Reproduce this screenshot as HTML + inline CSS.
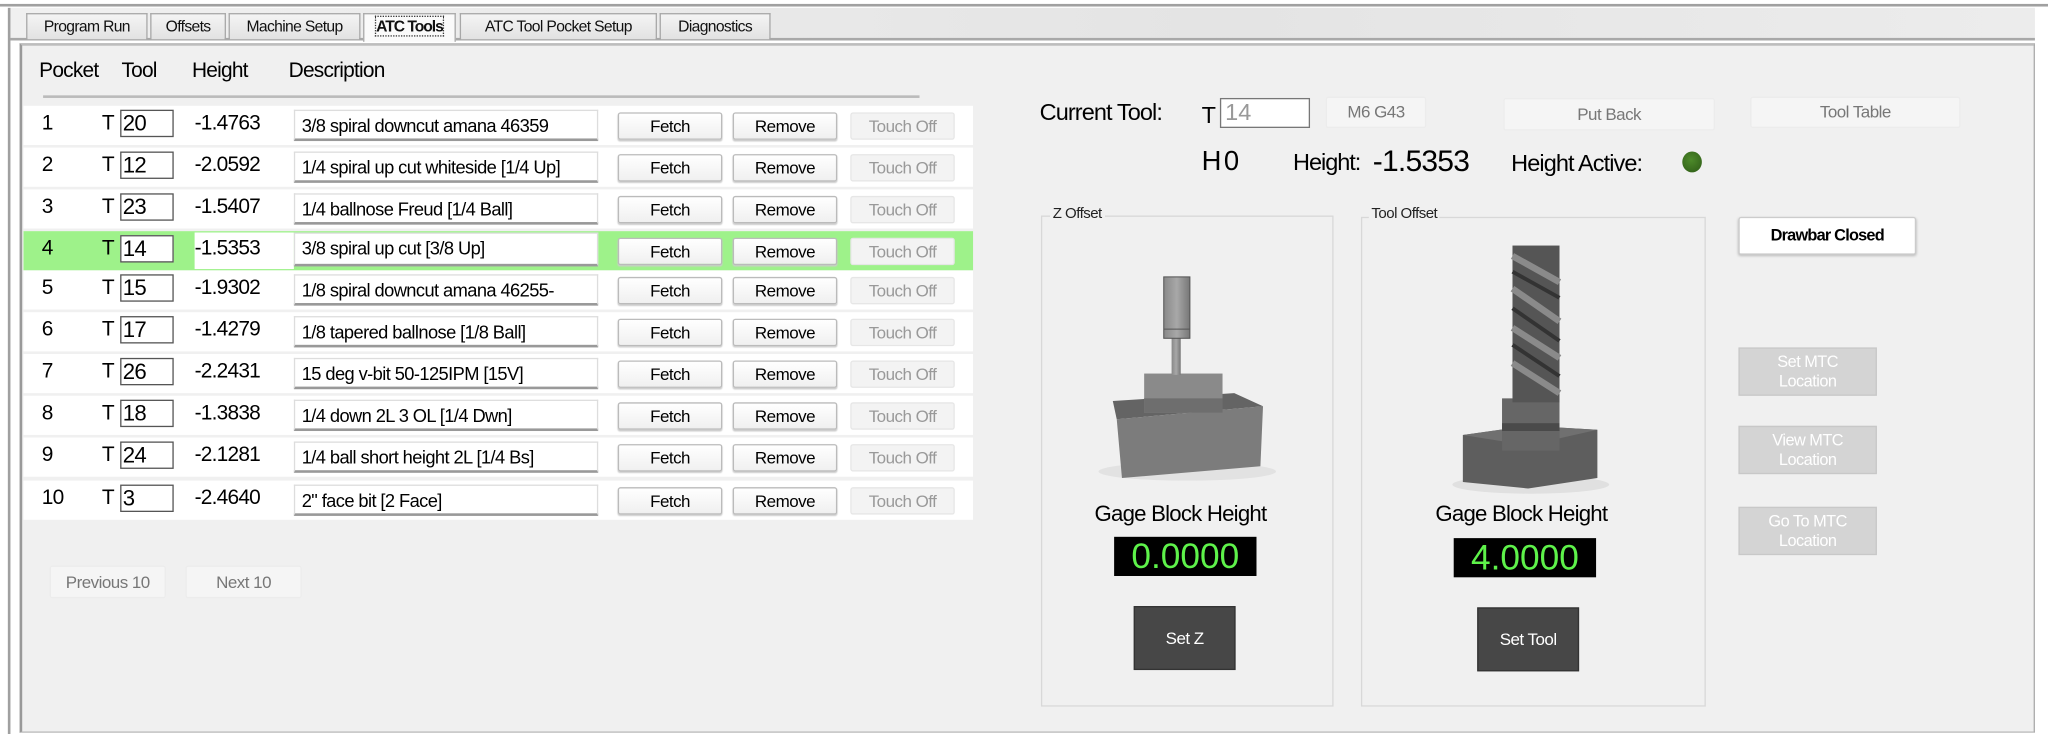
<!DOCTYPE html>
<html><head><meta charset="utf-8"><style>
*{box-sizing:border-box;margin:0;padding:0}
html,body{width:2048px;height:734px;overflow:hidden;background:#fff}
#s{position:absolute;left:0;top:0;width:1568px;height:562px;transform:scale(1.30612);transform-origin:0 0;font-family:"Liberation Sans",sans-serif;background:#fff}
.a{position:absolute}
.tab{position:absolute;top:10px;height:20px;border:1px solid #a8a8a8;border-bottom:none;background:linear-gradient(#f4f4f4,#e2e2e2);font-size:12px;line-height:18px;text-align:center;color:#111;letter-spacing:-.5px}
.row{position:absolute;left:18px;width:727px;height:30px;background:#fff}
.row span{position:absolute;font-size:16px;top:5px;letter-spacing:-.6px}
.tb{position:absolute;left:74px;top:3px;width:41px;height:21px;border:1px solid #555;font-size:17px;line-height:20px;padding-left:1px;background:#fff;letter-spacing:-.6px}
.desc{position:absolute;left:207px;top:3px;width:233px;height:24px;border:1px solid #ddd;border-bottom:2px solid #999;background:#fff;font-size:14px;line-height:22px;padding-left:5px;white-space:nowrap;overflow:hidden;letter-spacing:-.45px}
.btn{position:absolute;top:5px;height:21px;width:80px;border:1px solid #bbb;border-radius:2px;background:linear-gradient(#fff,#f0f0f0);font-size:13px;text-align:center;line-height:19px;box-shadow:0 1px 1px #ccc;letter-spacing:-.4px}
.dis{color:#999;border-color:#e6e6e6;background:#f3f3f3;box-shadow:none}
.fb{position:absolute;background:#f5f5f5;border:1px solid #ececec;border-radius:2px;color:#777;font-size:13px;text-align:center;letter-spacing:-.4px}
.mtc{position:absolute;left:1331px;width:106px;height:37px;background:#d4d4d4;border:1px solid #c8c8c8;color:#fff;font-size:12.5px;text-align:center;line-height:15px;padding-top:3px;letter-spacing:-.4px}
.grp{position:absolute;border:1px solid #d8d8d8}
.lbl{position:absolute;font-size:11.5px;background:#f0f0f0;padding:0 2px;color:#222;letter-spacing:-.4px}
.dro{position:absolute;background:#000;color:#5ef24a;font-size:27px;text-align:center;line-height:30px}
.dk{position:absolute;background:#474747;color:#fff;font-size:13px;text-align:center;border:1px solid #333;letter-spacing:-.4px}
.hd{position:absolute;top:46px;font-size:16px;letter-spacing:-.6px}
</style></head><body><div id="s">
<div class="a" style="left:0;top:0;width:1568px;height:5px;background:#fff;border-bottom:2px solid #a0a0a0"></div>
<div class="a" style="left:8px;top:6px;width:1550px;height:25px;background:linear-gradient(90deg,#f0f0f0,#e4e4e4 60%,#ececec);border-bottom:2px solid #a8a8a8"></div>
<div class="a" style="left:0;top:6px;width:8px;height:556px;background:#fff;border-right:2px solid #a0a0a0"></div>
<div class="tab" style="left:20px;width:93px">Program Run</div>
<div class="tab" style="left:115px;width:58px">Offsets</div>
<div class="tab" style="left:175px;width:101px">Machine Setup</div>
<div class="tab" style="left:278px;width:71px;background:#fafafa;height:22px"><span style="outline:1px dotted #333;font-weight:bold;letter-spacing:-.8px">ATC Tools</span></div>
<div class="tab" style="left:352px;width:151px">ATC Tool Pocket Setup</div>
<div class="tab" style="left:505px;width:85px">Diagnostics</div>
<div class="a" style="left:15px;top:33px;width:1543px;height:528px;background:#f0f0f0;border-left:2px solid #999;border-right:1px solid #aaa;border-bottom:1px solid #bbb;border-top:2px solid #bdbdbd"></div>
<div class="hd" style="left:30px">Pocket</div>
<div class="hd" style="left:93px">Tool</div>
<div class="hd" style="left:147px">Height</div>
<div class="hd" style="left:221px">Description</div>
<div class="a" style="left:33px;top:73px;width:671px;height:2px;background:#bbb"></div>

<div class="row" style="top:81px"><span style="left:14px">1</span><span style="left:60px">T</span><div class="tb">20</div><span style="left:131px">-1.4763</span><div class="desc">3/8 spiral downcut amana 46359</div><div class="btn" style="left:455px">Fetch</div><div class="btn" style="left:543px">Remove</div><div class="btn dis" style="left:633px">Touch Off</div></div>
<div class="row" style="top:113px"><span style="left:14px">2</span><span style="left:60px">T</span><div class="tb">12</div><span style="left:131px">-2.0592</span><div class="desc">1/4 spiral up cut whiteside [1/4 Up]</div><div class="btn" style="left:455px">Fetch</div><div class="btn" style="left:543px">Remove</div><div class="btn dis" style="left:633px">Touch Off</div></div>
<div class="row" style="top:145px"><span style="left:14px">3</span><span style="left:60px">T</span><div class="tb">23</div><span style="left:131px">-1.5407</span><div class="desc">1/4 ballnose Freud [1/4 Ball]</div><div class="btn" style="left:455px">Fetch</div><div class="btn" style="left:543px">Remove</div><div class="btn dis" style="left:633px">Touch Off</div></div>
<div class="row" style="top:177px;background:#9ef28a"><span style="left:14px">4</span><span style="left:60px">T</span><div class="tb">14</div><span style="left:131px;background:#fff;top:1px;height:28px;width:76px;padding-top:4px">-1.5353</span><div class="desc" style="top:1px;height:26px">3/8 spiral up cut [3/8 Up]</div><div class="btn" style="left:455px">Fetch</div><div class="btn" style="left:543px">Remove</div><div class="btn dis" style="left:633px">Touch Off</div></div>
<div class="row" style="top:207px"><span style="left:14px">5</span><span style="left:60px">T</span><div class="tb">15</div><span style="left:131px">-1.9302</span><div class="desc">1/8 spiral downcut amana 46255-</div><div class="btn" style="left:455px">Fetch</div><div class="btn" style="left:543px">Remove</div><div class="btn dis" style="left:633px">Touch Off</div></div>
<div class="row" style="top:239px"><span style="left:14px">6</span><span style="left:60px">T</span><div class="tb">17</div><span style="left:131px">-1.4279</span><div class="desc">1/8 tapered ballnose [1/8 Ball]</div><div class="btn" style="left:455px">Fetch</div><div class="btn" style="left:543px">Remove</div><div class="btn dis" style="left:633px">Touch Off</div></div>
<div class="row" style="top:271px"><span style="left:14px">7</span><span style="left:60px">T</span><div class="tb">26</div><span style="left:131px">-2.2431</span><div class="desc">15 deg v-bit 50-125IPM [15V]</div><div class="btn" style="left:455px">Fetch</div><div class="btn" style="left:543px">Remove</div><div class="btn dis" style="left:633px">Touch Off</div></div>
<div class="row" style="top:303px"><span style="left:14px">8</span><span style="left:60px">T</span><div class="tb">18</div><span style="left:131px">-1.3838</span><div class="desc">1/4 down 2L 3 OL [1/4 Dwn]</div><div class="btn" style="left:455px">Fetch</div><div class="btn" style="left:543px">Remove</div><div class="btn dis" style="left:633px">Touch Off</div></div>
<div class="row" style="top:335px"><span style="left:14px">9</span><span style="left:60px">T</span><div class="tb">24</div><span style="left:131px">-2.1281</span><div class="desc">1/4 ball short height 2L [1/4 Bs]</div><div class="btn" style="left:455px">Fetch</div><div class="btn" style="left:543px">Remove</div><div class="btn dis" style="left:633px">Touch Off</div></div>
<div class="row" style="top:368px"><span style="left:14px">10</span><span style="left:60px">T</span><div class="tb">3</div><span style="left:131px">-2.4640</span><div class="desc">2" face bit [2 Face]</div><div class="btn" style="left:455px">Fetch</div><div class="btn" style="left:543px">Remove</div><div class="btn dis" style="left:633px">Touch Off</div></div>

<div class="fb" style="left:38px;top:433px;width:89px;height:25px;line-height:23px">Previous 10</div>
<div class="fb" style="left:142px;top:433px;width:89px;height:25px;line-height:23px">Next 10</div>

<div class="a" style="left:796px;top:76px;font-size:18px;letter-spacing:-.7px">Current Tool:</div>
<div class="a" style="left:920px;top:78px;font-size:18px">T</div>
<div class="a" style="left:934px;top:75px;width:69px;height:23px;border:1px solid #777;background:#fff;color:#999;font-size:18px;line-height:21px;padding-left:3px">14</div>
<div class="fb" style="left:1015px;top:74px;width:77px;height:24px;line-height:22px">M6 G43</div>
<div class="fb" style="left:1151px;top:75px;width:162px;height:25px;line-height:23px">Put Back</div>
<div class="fb" style="left:1340px;top:74px;width:161px;height:24px;line-height:22px">Tool Table</div>
<div class="a" style="left:920px;top:112px;font-size:21px;letter-spacing:-2px">H 0</div>
<div class="a" style="left:990px;top:114px;font-size:18px;letter-spacing:-.8px">Height:</div>
<div class="a" style="left:1051px;top:110px;font-size:23px;letter-spacing:-.6px">-1.5353</div>
<div class="a" style="left:1157px;top:115px;font-size:18px;letter-spacing:-.7px">Height Active:</div>
<div class="a" style="left:1288px;top:116px;width:15px;height:16px;border-radius:50%;background:radial-gradient(circle at 45% 40%,#4d8a2a,#2d5a16)"></div>

<div class="grp" style="left:797px;top:165px;width:224px;height:376px"></div>
<div class="lbl" style="left:804px;top:158px">Z Offset</div>
<div class="grp" style="left:1042px;top:166px;width:264px;height:375px"></div>
<div class="lbl" style="left:1048px;top:158px">Tool Offset</div>

<svg class="a" style="left:797px;top:165px" width="224" height="220">
<defs><linearGradient id="g1" x1="0" x2="1"><stop offset="0" stop-color="#888"/><stop offset=".5" stop-color="#a8a8a8"/><stop offset="1" stop-color="#777"/></linearGradient></defs>
<ellipse cx="112" cy="196" rx="68" ry="7" fill="#e2e2e2"/>
<polygon points="55,142 148,136 170,146 58,156" fill="#646464"/>
<polygon points="58,156 170,146 168,192 62,201" fill="#7c7c7c"/>
<rect x="79" y="121" width="60" height="30" fill="#8a8a8a"/>
<rect x="79" y="140" width="60" height="11" fill="#6e6e6e"/>
<rect x="100" y="92" width="7" height="30" fill="url(#g1)"/>
<rect x="94" y="47" width="20" height="47" fill="url(#g1)" stroke="#555" stroke-width=".8"/>
<line x1="94" y1="87" x2="114" y2="87" stroke="#555" stroke-width=".8"/>
</svg>
<svg class="a" style="left:1042px;top:166px" width="264" height="220">
<ellipse cx="130" cy="205" rx="60" ry="7" fill="#e0e0e0"/>
<polygon points="78,167 128,160 181,163 181,200 128,208 78,203" fill="#5e5e5e"/>
<polygon points="78,167 128,160 181,163 128,175" fill="#707070"/>
<rect x="108" y="139" width="44" height="40" fill="#666"/>
<rect x="108" y="158" width="44" height="6" fill="#4a4a4a"/>
<rect x="116" y="22" width="36" height="120" fill="#555"/>
<path d="M116,30 L152,50 M116,55 L152,80 M116,85 L152,108 M116,112 L152,135" stroke="#8a8a8a" stroke-width="5" fill="none"/>
<path d="M116,42 L152,62 M116,70 L152,95 M116,98 L152,122" stroke="#333" stroke-width="3" fill="none"/>
</svg>

<div class="a" style="left:838px;top:384px;font-size:17px;letter-spacing:-.6px">Gage Block Height</div>
<div class="dro" style="left:853px;top:411px;width:109px;height:30px">0.0000</div>
<div class="dk" style="left:868px;top:464px;width:78px;height:49px;line-height:47px">Set Z</div>
<div class="a" style="left:1099px;top:384px;font-size:17px;letter-spacing:-.6px">Gage Block Height</div>
<div class="dro" style="left:1113px;top:412px;width:109px;height:30px">4.0000</div>
<div class="dk" style="left:1131px;top:465px;width:78px;height:49px;line-height:47px">Set Tool</div>

<div class="a" style="left:1331px;top:166px;width:136px;height:29px;background:#fff;border:1px solid #ccc;border-radius:2px;box-shadow:0 1px 2px #bbb;font-size:12.5px;font-weight:bold;text-align:center;line-height:27px;letter-spacing:-.6px">Drawbar Closed</div>
<div class="mtc" style="top:266px">Set MTC<br>Location</div>
<div class="mtc" style="top:326px">View MTC<br>Location</div>
<div class="mtc" style="top:388px">Go To MTC<br>Location</div>
</div></body></html>
